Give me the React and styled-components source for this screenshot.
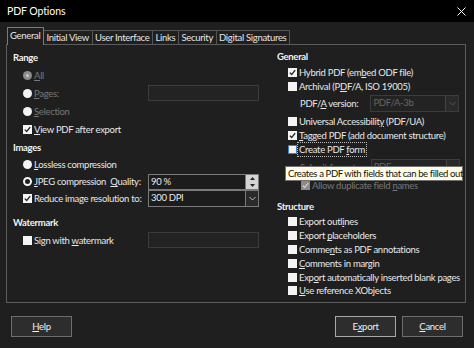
import React from 'react';
import styled, { createGlobalStyle, css } from 'styled-components';

const GlobalStyle = createGlobalStyle`
  html, body {
    margin: 0;
    padding: 0;
    background: #1f1f1f;
  }
  body {
    font-family: Lato, "Open Sans", "Liberation Sans", sans-serif;
    font-size: 9.5px;
    letter-spacing: -0.3px;
    color: #e8e8e8;
  }
`;

const Window = styled.div`
  width: 474px;
  height: 348px;
  display: flex;
  flex-direction: column;
  background: #1f1f1f;
  overflow: hidden;
`;

const TitleBar = styled.div`
  height: 22px;
  flex: none;
  background: #000;
  display: flex;
  align-items: center;
  justify-content: space-between;
  padding: 0 8px 0 7px;
  font-size: 10.5px;
  letter-spacing: -0.1px;
  color: #fff;
`;

const Content = styled.div`
  padding: 5px 8px 0 6px;
`;

const TabBar = styled.div`
  display: flex;
  align-items: flex-end;
  height: 17px;
  padding-left: 1px;
`;

const Tab = styled.div`
  height: 14px;
  line-height: 13px;
  padding: 0 3px 0 2px;
  border: 1px solid #555;
  border-bottom: none;
  margin-right: -1px;
  color: #e6e6e6;
  box-sizing: border-box;
  ${(p) =>
    p.$active &&
    css`
      height: 18px;
      line-height: 16px;
      border-color: #7a7a7a;
      background: #1f1f1f;
      position: relative;
      z-index: 1;
      margin-bottom: -1px;
    `}
`;

const Panel = styled.div`
  border: 1px solid #5c5c5c;
  height: 259px;
  box-sizing: border-box;
  display: grid;
  grid-template-columns: 263px 1fr;
`;

const Column = styled.div`
  padding: ${(p) => p.$pad};
  display: flex;
  flex-direction: column;
`;

const Heading = styled.div`
  height: 16px;
  line-height: 16px;
  font-weight: 700;
  color: #f2f2f2;
  margin-top: ${(p) => p.$mt || 0}px;
`;

const Row = styled.div`
  position: relative;
  display: flex;
  align-items: center;
  height: ${(p) => p.$h}px;
  padding-left: ${(p) => p.$indent || 0}px;
  flex: none;
`;

const Slot = styled.span`
  width: 10px;
  height: 10px;
  flex: none;
  display: flex;
  align-items: center;
  justify-content: center;
  margin-right: 2px;
`;

const RadioDot = styled.span`
  width: 9px;
  height: 9px;
  border-radius: 50%;
  box-sizing: border-box;
  display: flex;
  align-items: center;
  justify-content: center;
  ${(p) =>
    p.$state === 'off' &&
    css`
      background: #f4f4f4;
    `}
  ${(p) =>
    p.$state === 'on' &&
    css`
      border: 2px solid #f4f4f4;
      background: #1f1f1f;
    `}
  ${(p) =>
    p.$state === 'disabled' &&
    css`
      background: #8c8c8c;
      &::after {
        content: '';
        width: 3px;
        height: 3px;
        border-radius: 50%;
        background: #c8c8c8;
      }
    `}
`;

const Box = styled.span`
  width: 9px;
  height: 9px;
  box-sizing: border-box;
  background: ${(p) => (p.$disabled ? '#8a8a8a' : '#f4f4f4')};
  border: 1px solid ${(p) => (p.$focus ? '#3d7fd0' : p.$disabled ? '#8a8a8a' : '#f4f4f4')};
  display: flex;
  align-items: center;
  justify-content: center;
`;

const Label = styled.span`
  white-space: nowrap;
  color: ${(p) => (p.$disabled ? '#777' : '#e8e8e8')};
  ${(p) =>
    p.$focus &&
    css`
      outline: 1px dotted #bbb;
      outline-offset: 1px;
    `}
`;

const Mn = styled.span`
  text-decoration: underline;
  text-underline-offset: 1px;
`;

const Field = styled.div`
  margin-left: ${(p) => (p.$left ? `${p.$left}px` : 'auto')};
  width: ${(p) => p.$w || 111}px;
  height: ${(p) => p.$fh || 16}px;
  box-sizing: border-box;
  border: 1px solid ${(p) => (p.$disabled ? '#3c3c3c' : '#7a7a7a')};
  background: ${(p) => (p.$disabled ? '#232323' : '#1c1c1c')};
  display: flex;
  align-items: stretch;
  color: ${(p) => (p.$disabled ? '#666' : '#eaeaea')};
  flex: none;
`;

const FieldText = styled.span`
  flex: 1;
  padding-left: 2px;
  line-height: 14px;
`;

const SpinBox = styled.span`
  width: 12px;
  display: flex;
  flex-direction: column;
  background: #d4d4d4;
  border-left: 1px solid #7a7a7a;
`;

const SpinHalf = styled.span`
  flex: 1;
  display: flex;
  align-items: center;
  justify-content: center;
`;

const DropBtn = styled.span`
  width: 12px;
  display: flex;
  align-items: center;
  justify-content: center;
  border-left: 1px solid ${(p) => (p.$disabled ? '#444' : '#7a7a7a')};
  background: #2a2a2a;
`;

const Tooltip = styled.div`
  position: absolute;
  left: 8px;
  top: 24px;
  width: 178px;
  height: 15px;
  box-sizing: border-box;
  border: 1px solid #707070;
  background: #fffde6;
  color: #111;
  line-height: 13px;
  padding-left: 2px;
  letter-spacing: -0.38px;
  white-space: nowrap;
  z-index: 5;
`;

const Footer = styled.div`
  display: flex;
  align-items: center;
  padding: 13px 11px 0 11px;
  gap: 6px;
`;

const Button = styled.div`
  width: 61px;
  height: 21px;
  box-sizing: border-box;
  border: 1px solid ${(p) => (p.$default ? '#a8a8a8' : '#6e6e6e')};
  background: #2d2d2d;
  display: flex;
  align-items: center;
  justify-content: center;
  color: #f0f0f0;
  margin-left: ${(p) => (p.$push ? 'auto' : 0)};
`;

const Check = ({ checked, disabled, focus }) => (
  <Slot>
    <Box $disabled={disabled} $focus={focus}>
      {checked && (
        <svg width="7" height="7" viewBox="0 0 7 7">
          <polyline
            points="0.8,3.6 2.7,5.5 6.2,1.2"
            fill="none"
            stroke={disabled ? '#d0d0d0' : '#1f1f1f'}
            strokeWidth="1.3"
          />
        </svg>
      )}
    </Box>
  </Slot>
);

const Radio = ({ state }) => (
  <Slot>
    <RadioDot $state={state} />
  </Slot>
);

const Chevron = ({ color }) => (
  <svg width="7" height="5" viewBox="0 0 7 5">
    <polyline points="0.5,1 3.5,4 6.5,1" fill="none" stroke={color} strokeWidth="1" />
  </svg>
);

const Combo = ({ value, disabled, left, w }) => (
  <Field $disabled={disabled} $left={left} $w={w} $fh={17}>
    <FieldText>{value}</FieldText>
    <DropBtn $disabled={disabled}>
      <Chevron color={disabled ? '#555' : '#bbb'} />
    </DropBtn>
  </Field>
);

const Spin = ({ value }) => (
  <Field>
    <FieldText>{value}</FieldText>
    <SpinBox>
      <SpinHalf>
        <svg width="5" height="3" viewBox="0 0 5 3">
          <polygon points="0,3 2.5,0 5,3" fill="#222" />
        </svg>
      </SpinHalf>
      <SpinHalf>
        <svg width="5" height="3" viewBox="0 0 5 3">
          <polygon points="0,0 2.5,3 5,0" fill="#222" />
        </svg>
      </SpinHalf>
    </SpinBox>
  </Field>
);

const CheckRow = ({ h = 14, indent = 10, checked, disabled, focus, children }) => (
  <Row $h={h} $indent={indent}>
    <Check checked={checked} disabled={disabled} focus={focus} />
    <Label $disabled={disabled} $focus={focus}>
      {children}
    </Label>
  </Row>
);

export default function App() {
  return (
    <>
      <GlobalStyle />
      <Window>
        <TitleBar>
          <span>PDF Options</span>
          <svg width="9" height="9" viewBox="0 0 9 9">
            <path d="M0.5 0.5 L8.5 8.5 M8.5 0.5 L0.5 8.5" stroke="#fff" strokeWidth="1" />
          </svg>
        </TitleBar>
        <Content>
          <TabBar>
            <Tab $active>General</Tab>
            <Tab>Initial View</Tab>
            <Tab>User Interface</Tab>
            <Tab>Links</Tab>
            <Tab>Security</Tab>
            <Tab>Digital Signatures</Tab>
          </TabBar>
          <Panel>
            <Column $pad="5px 11px 0 6px">
              <Heading>Range</Heading>
              <Row $h={18} $indent={9}>
                <Radio state="disabled" />
                <Label $disabled>
                  <Mn>A</Mn>ll
                </Label>
              </Row>
              <Row $h={18} $indent={9}>
                <Radio state="off" />
                <Label $disabled>
                  <Mn>P</Mn>ages:
                </Label>
                <Field $disabled />
              </Row>
              <Row $h={18} $indent={9}>
                <Radio state="off" />
                <Label $disabled>
                  <Mn>S</Mn>election
                </Label>
              </Row>
              <CheckRow h={18} indent={9} checked>
                <Mn>V</Mn>iew PDF after export
              </CheckRow>

              <Heading $mt={2}>Images</Heading>
              <Row $h={17} $indent={9}>
                <Radio state="off" />
                <Label>
                  <Mn>L</Mn>ossless compression
                </Label>
              </Row>
              <Row $h={17} $indent={9}>
                <Radio state="on" />
                <Label>
                  <Mn>J</Mn>PEG compression&nbsp;&nbsp;<Mn>Q</Mn>uality:
                </Label>
                <Spin value="90 %" />
              </Row>
              <Row $h={17} $indent={9}>
                <Check checked />
                <Label>Reduce image resolution to:</Label>
                <Combo value="300 DPI" />
              </Row>

              <Heading $mt={8}>Watermark</Heading>
              <Row $h={18} $indent={9}>
                <Check />
                <Label>
                  Sign with <Mn>w</Mn>atermark
                </Label>
                <Field $disabled />
              </Row>
            </Column>

            <Column $pad="4px 9px 0 7px">
              <Heading>General</Heading>
              <CheckRow checked>
                Hybrid PDF (em<Mn>b</Mn>ed ODF file)
              </CheckRow>
              <CheckRow>
                Archival (P<Mn>D</Mn>F/A, ISO 19005)
              </CheckRow>
              <Row $h={21} $indent={23}>
                <Label>
                  PDF/<Mn>A</Mn> version:
                </Label>
                <Combo value="PDF/A-3b" disabled left={12} w={89} />
              </Row>
              <CheckRow>
                Universal Accessibilit<Mn>y</Mn> (PDF/UA)
              </CheckRow>
              <CheckRow checked>
                <Mn>T</Mn>agged PDF (add document structure)
              </CheckRow>
              <Row $h={14} $indent={10}>
                <Check focus />
                <Label $focus>
                  Create PDF <Mn>f</Mn>orm
                </Label>
                <Tooltip>Creates a PDF with fields that can be filled out</Tooltip>
              </Row>
              <Row $h={22} $indent={23}>
                <Label $disabled>Submit format:</Label>
                <Combo value="PDF" disabled left={13} w={89} />
              </Row>
              <CheckRow indent={23} checked disabled>
                Allow duplicate field <Mn>n</Mn>ames
              </CheckRow>

              <Heading $mt={7}>Structure</Heading>
              <CheckRow h={13.8}>
                Export outl<Mn>i</Mn>nes
              </CheckRow>
              <CheckRow h={13.8}>
                Export <Mn>p</Mn>laceholders
              </CheckRow>
              <CheckRow h={13.8}>
                Comme<Mn>n</Mn>ts as PDF annotations
              </CheckRow>
              <CheckRow h={13.8}>
                <Mn>C</Mn>omments in margin
              </CheckRow>
              <CheckRow h={13.8}>
                Exp<Mn>o</Mn>rt automatically inserted blank pages
              </CheckRow>
              <CheckRow h={13.8}>
                <Mn>U</Mn>se reference XObjects
              </CheckRow>
            </Column>
          </Panel>
        </Content>
        <Footer>
          <Button>
            <span>
              <Mn>H</Mn>elp
            </span>
          </Button>
          <Button $default $push>
            <span>
              E<Mn>x</Mn>port
            </span>
          </Button>
          <Button>
            <span>
              <Mn>C</Mn>ancel
            </span>
          </Button>
        </Footer>
      </Window>
    </>
  );
}
